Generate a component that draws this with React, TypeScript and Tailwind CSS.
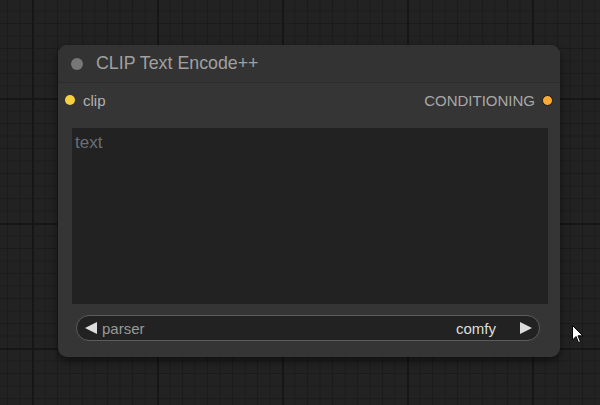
import React from "react";

export default function App() {
  return (
    <div className="relative w-[600px] h-[405px] overflow-hidden bg-[#222222] [font-family:'Liberation_Sans',Arial,sans-serif]">
      <div className="absolute inset-0 bg-[linear-gradient(to_right,#161616_2px,transparent_2px),linear-gradient(to_bottom,#161616_2px,transparent_2px),linear-gradient(to_right,#1b1b1b_1px,transparent_1px),linear-gradient(to_bottom,#1b1b1b_1px,transparent_1px)] bg-[size:125px_125px,125px_125px,12.5px_12.5px,12.5px_12.5px] bg-[position:32px_-27px,32px_-27px,32px_-27px,32px_-27px]" />
      <div className="relative pt-[45px] pl-[58px]">
        <div className="w-[502px] h-[312px] rounded-[9px] bg-[#353535] shadow-[0_4px_8px_rgba(0,0,0,0.5)] flex flex-col overflow-hidden">
          <div className="h-[38px] flex items-center bg-[#333333] border-b border-[#2c2c2c]">
            <div className="ml-[13px] w-[12px] h-[12px] rounded-full bg-[#777777]" />
            <div className="ml-[13px] text-[17.8px] text-[#a0a0a0] leading-none">CLIP Text Encode++</div>
          </div>
          <div className="h-[34px] flex items-center justify-between">
            <div className="flex items-center">
              <div className="ml-[7px] w-[10px] h-[10px] rounded-full bg-[#f7d03d]" />
              <span className="ml-[8px] text-[15px] text-[#b0b0b0] leading-none">clip</span>
            </div>
            <div className="flex items-center">
              <span className="text-[15px] text-[#a8a8a8] leading-none">CONDITIONING</span>
              <div className="ml-[7px] mr-[7px] w-[11px] h-[11px] rounded-full bg-[#ffa931] border border-[#1a1a1a]" />
            </div>
          </div>
          <div className="ml-[14px] mr-[12px] mt-[11px] h-[176px] bg-[#222222] pl-[3px] pt-[3px]">
            <span className="text-[17px] text-[#6b6f75] leading-none">text</span>
          </div>
          <div className="ml-[18px] mr-[20px] mt-[11px] h-[26px] rounded-full bg-[#222222] border border-[#5c5c5c] flex items-center pl-[8px] pr-[7px]">
            <svg width="12" height="12" viewBox="0 0 12 12">
              <path d="M0 6 L12 0 L12 12 Z" fill="#dddddd" />
            </svg>
            <span className="ml-[5px] text-[15px] text-[#999999] leading-none">parser</span>
            <span className="ml-auto text-[15px] text-[#dddddd] leading-none">comfy</span>
            <svg className="ml-[24px]" width="12" height="12" viewBox="0 0 12 12">
              <path d="M12 6 L0 0 L0 12 Z" fill="#dddddd" />
            </svg>
          </div>
        </div>
      </div>
      <svg className="absolute left-[572px] top-[325px]" width="12" height="19" viewBox="0 0 12 19">
        <path d="M0.5 0.5 L0.5 15 L4 11.5 L6.5 17.5 L8.5 16.7 L6 10.8 L10.8 10.8 Z" fill="#ffffff" stroke="#000000" strokeWidth="1" />
      </svg>
    </div>
  );
}
